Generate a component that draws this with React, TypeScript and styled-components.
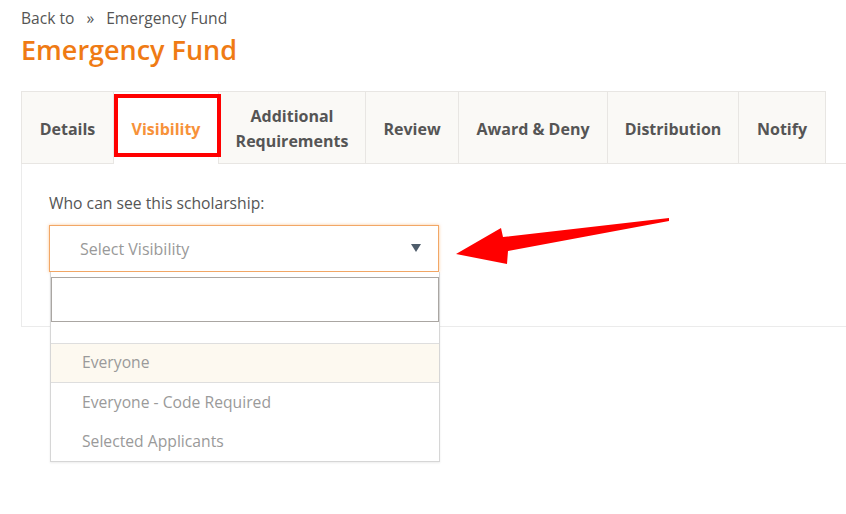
import React from 'react';
import styled, { createGlobalStyle } from 'styled-components';

const GlobalStyle = createGlobalStyle`
  html, body {
    margin: 0;
    padding: 0;
    background: #fff;
    overflow: hidden;
  }
  body {
    font-family: 'Open Sans', 'Noto Sans', sans-serif;
    color: #555;
  }
`;

const Page = styled.div`
  position: relative;
  padding: 7px 0 0 21px;
  width: 846px;
  height: 514px;
  box-sizing: border-box;
`;

const Breadcrumb = styled.div`
  display: flex;
  gap: 12px;
  font-size: 15.6px;
  line-height: 22px;
  color: #555;
`;

const Title = styled.h1`
  margin: 5px 0 0;
  font-size: 27px;
  line-height: 32px;
  font-weight: 600;
  color: #ef7b14;
`;

const Card = styled.div`
  margin-top: 25px;
  width: 845px;
`;

const TabBar = styled.div`
  display: flex;
  border-bottom: 1px solid #e8e6e3;
`;

const Tab = styled.div<{ $w: number; $active?: boolean }>`
  position: relative;
  width: ${(p) => p.$w}px;
  display: flex;
  align-items: center;
  justify-content: center;
  text-align: center;
  box-sizing: border-box;
  padding-top: 3px;
  border-top: 1px solid #e8e6e3;
  border-right: 1px solid #e8e6e3;
  &:first-child {
    border-left: 1px solid #e8e6e3;
  }
  background: ${(p) => (p.$active ? '#fff' : '#faf9f6')};
  margin-bottom: ${(p) => (p.$active ? '-1px' : '0')};
  height: ${(p) => (p.$active ? '73px' : '72px')};
  font-size: 16px;
  line-height: 25px;
  font-weight: 700;
  color: ${(p) => (p.$active ? '#f7923a' : '#555')};
`;

const Highlight = styled.div`
  position: absolute;
  z-index: 3;
  left: 0;
  top: 2px;
  width: 107px;
  height: 63px;
  box-sizing: border-box;
  border: 4px solid #ff0000;
`;

const Panel = styled.div`
  position: relative;
  height: 163px;
  box-sizing: border-box;
  border-left: 1px solid #ebebeb;
  border-bottom: 1px solid #ebebeb;
  padding: 28px 0 0 27px;
`;

const Label = styled.div`
  font-size: 15.7px;
  line-height: 22px;
  color: #555;
`;

const SelectWrap = styled.div`
  position: relative;
  margin-top: 11px;
  width: 390px;
`;

const SelectBox = styled.div`
  height: 47px;
  box-sizing: border-box;
  border: 1px solid #f2a766;
  box-shadow: 0 0 3px rgba(245, 150, 60, 0.55);
  display: flex;
  align-items: center;
  justify-content: space-between;
  padding: 0 17px 0 30px;
  font-size: 16px;
  color: #999;
  background: #fff;
`;

const Caret = styled.span`
  width: 0;
  height: 0;
  border-left: 5px solid transparent;
  border-right: 5px solid transparent;
  border-top: 8px solid #4f5d6b;
  margin-top: -2px;
`;

const Dropdown = styled.div`
  position: absolute;
  z-index: 2;
  left: 1px;
  top: 47px;
  width: 390px;
  box-sizing: border-box;
  background: #fff;
  border: 1px solid #d6d6d6;
  border-top: none;
  box-shadow: 0 1px 2px rgba(0, 0, 0, 0.08);
`;

const SearchRow = styled.div`
  padding: 5px 0 21px;
  border-bottom: 1px solid #dedede;
`;

const SearchInput = styled.div`
  height: 45px;
  box-sizing: border-box;
  border: 1px solid #aaa6a2;
`;

const Option = styled.div<{ $hover?: boolean }>`
  height: 39px;
  box-sizing: border-box;
  display: flex;
  align-items: center;
  padding: 0 0 2px 31px;
  font-size: 15.7px;
  color: #9a9a9a;
  background: ${(p) => (p.$hover ? '#fdf9f0' : '#fff')};
  border-bottom: ${(p) => (p.$hover ? '1px solid #dedede' : 'none')};
`;

const Arrow = styled.svg`
  position: absolute;
  left: 0;
  top: 0;
  pointer-events: none;
`;

const tabs = [
  { label: 'Details', w: 93 },
  { label: 'Visibility', w: 105, active: true },
  { label: 'Additional\nRequirements', w: 147 },
  { label: 'Review', w: 93 },
  { label: 'Award & Deny', w: 149 },
  { label: 'Distribution', w: 131 },
  { label: 'Notify', w: 87 },
];

const options = ['Everyone', 'Everyone - Code Required', 'Selected Applicants'];

const App: React.FunctionComponent = () => (
  <>
    <GlobalStyle />
    <Page>
      <Breadcrumb>
        <span>Back to</span>
        <span>»</span>
        <span>Emergency Fund</span>
      </Breadcrumb>
      <Title>Emergency Fund</Title>
      <Card>
        <TabBar>
          {tabs.map((t) => (
            <Tab key={t.label} $w={t.w} $active={t.active}>
              <span style={{ whiteSpace: 'pre-line' }}>{t.label}</span>
              {t.active && <Highlight />}
            </Tab>
          ))}
        </TabBar>
        <Panel>
          <Label>Who can see this scholarship:</Label>
          <SelectWrap>
            <SelectBox>
              <span>Select Visibility</span>
              <Caret />
            </SelectBox>
            <Dropdown>
              <SearchRow>
                <SearchInput />
              </SearchRow>
              {options.map((o, i) => (
                <Option key={o} $hover={i === 0}>
                  {o}
                </Option>
              ))}
            </Dropdown>
          </SelectWrap>
        </Panel>
      </Card>
      <Arrow width="846" height="514" viewBox="0 0 846 514">
        <polygon
          points="456,254 501,228 503,237 669,218 669,221 508,251 507,264"
          fill="#ff0000"
        />
      </Arrow>
    </Page>
  </>
);

export default App;
